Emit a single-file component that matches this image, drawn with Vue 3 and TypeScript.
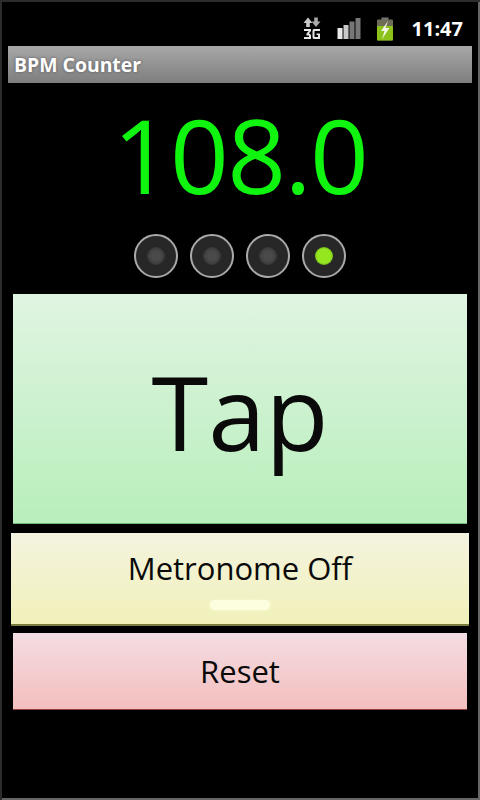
<script setup lang="ts">
const lights = [false, false, false, true]
</script>

<template>
  <div class="screen">
    <div class="status">
      <svg class="net" width="20" height="24" viewBox="0 0 20 24">
        <path d="M6 0.5 L10.5 6 H7.8 V10 H4.2 V6 H1.5 Z" fill="#c8c8c8" />
        <path d="M14 10 L9.5 4.5 H12.2 V0.5 H15.8 V4.5 H18.5 Z" fill="#a8a8a8" />
        <path d="M2 12 H9 V14 L7 16.3 L9 18 V22 H2 V20 H7 V18.5 H4.5 V16.5 L6.8 14 H2 Z" fill="#e6e6e6" />
        <path d="M18 12 H12 Q10.5 12 10.5 14 V20 Q10.5 22 12 22 H18 V16.5 H14.5 V18 H16 V20 H12.5 V14 H18 Z" fill="#e6e6e6" />
      </svg>
      <svg class="signal" width="24" height="24" viewBox="0 0 24 24">
        <rect x="0.5" y="11" width="5" height="11" fill="#e8e8e8" />
        <rect x="6.5" y="8" width="5" height="14" fill="#c9c9c9" />
        <rect x="12.5" y="4.5" width="5" height="17.5" fill="#777" />
        <rect x="18.5" y="1" width="5" height="21" fill="#777" />
      </svg>
      <svg class="battery" width="18" height="24" viewBox="0 0 18 24">
        <rect x="5.5" y="0.5" width="7" height="3" fill="#777" />
        <rect x="1" y="2.5" width="16" height="21" rx="1" fill="#6d6d58" />
        <rect x="1" y="9" width="16" height="14.5" rx="1" fill="#8cc21a" />
        <path d="M12 4 L5 14 H8.5 L6 22 L13.5 11 H9.5 Z" fill="#f4f7e8" />
      </svg>
      <span class="clock">11:47</span>
    </div>

    <div class="titlebar"><span class="title">BPM Counter</span></div>

    <div class="readout">108.0</div>

    <div class="lights">
      <div v-for="(on, i) in lights" :key="i" class="light">
        <span class="dot" :class="{ on }"></span>
      </div>
    </div>

    <div class="buttons">
      <button class="btn tap">Tap</button>
      <button class="btn metro">
        <span>Metronome Off</span>
        <span class="indicator"></span>
      </button>
      <button class="btn reset">Reset</button>
    </div>
  </div>
</template>

<style>
html, body { margin: 0; background: #000; }
</style>

<style scoped>
.screen {
  width: 480px;
  height: 800px;
  background: #000;
  overflow: hidden;
  font-family: "Open Sans", "Noto Sans", sans-serif;
  box-sizing: border-box;
  box-shadow: inset 2px 2px 0 #2c2c2c, inset -2px -2px 0 #666;
}
.status {
  height: 46px;
  box-sizing: border-box;
  padding: 17px 17px 0 0;
  display: flex;
  align-items: flex-start;
  justify-content: flex-end;
}
.net { margin-right: 15px; }
.signal { margin-right: 15px; }
.battery { margin-right: 18px; }
.clock {
  color: #fff;
  font-weight: 700;
  font-size: 20px;
  line-height: 24px;
}
.titlebar {
  margin: 0 8px;
  height: 37px;
  box-sizing: border-box;
  background: linear-gradient(#a8a8a8, #7e7e7e);
  display: flex;
  align-items: center;
  padding-left: 6px;
}
.title {
  color: #fff;
  font-size: 19.4px;
  font-weight: 700;
  text-shadow: 0 0 3px #555;
}
.readout {
  margin-top: 11px;
  color: #10f510;
  font-size: 103px;
  letter-spacing: -1.6px;
  line-height: 120px;
  text-align: center;
}
.lights {
  margin-top: 20px;
  display: flex;
  justify-content: center;
  gap: 12px;
}
.light {
  width: 44px;
  height: 44px;
  box-sizing: border-box;
  border: 2px solid #aaa;
  border-radius: 50%;
  background: #272727;
  display: flex;
  align-items: center;
  justify-content: center;
}
.dot {
  width: 18px;
  height: 18px;
  border-radius: 50%;
  background: radial-gradient(circle, #4a4a4a 35%, #272727 100%);
}
.dot.on { background: radial-gradient(circle, #96e61f 55%, #3c5a20 100%); }
.buttons {
  margin-top: 16px;
  display: flex;
  flex-direction: column;
}
.btn {
  display: block;
  border: 0;
  padding: 0;
  font-family: inherit;
  color: #0a0a0a;
  box-sizing: border-box;
}
.tap {
  margin: 0 13px;
  width: 454px;
  height: 230px;
  padding-top: 4px;
  font-size: 103px;
  background: linear-gradient(#e0f4e2, #b8efbb);
  border-bottom: 1px solid #6fb873;
}
.metro {
  margin: 9px 11px 0;
  width: 458px;
  height: 93px;
  font-size: 31px;
  background: linear-gradient(#f4f3df, #f1f1ba);
  border-bottom: 2px solid #7d7d40;
  display: flex;
  flex-direction: column;
  align-items: center;
  padding-top: 14px;
}
.indicator {
  margin-top: 11px;
  width: 60px;
  height: 10px;
  border-radius: 5px;
  background: #fdfde0;
  box-shadow: 0 0 3px #fdfdd0;
}
.reset {
  margin: 7px 13px 0;
  width: 454px;
  height: 77px;
  font-size: 31px;
  background: linear-gradient(#f3dde2, #f4bebe);
  border-bottom: 1px solid #8a4040;
}
</style>
